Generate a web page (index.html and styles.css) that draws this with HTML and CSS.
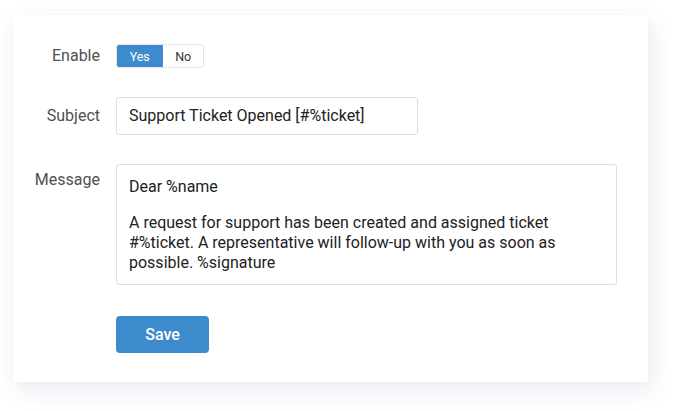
FILE: index.html
```html
<!DOCTYPE html>
<html lang="en">
<head>
    <meta charset="UTF-8">
    <meta name="viewport" content="width=device-width, initial-scale=1.0">
    <title>Ticket Notification</title>
    <link rel="stylesheet" href="styles.css">
</head>
<body>

    <div class="card">
        <form class="settings-form">
            <label class="field-label label-middle">Enable</label>
            <div class="toggle">
                <span class="toggle-option active">Yes</span>
                <span class="toggle-option">No</span>
            </div>

            <label class="field-label label-middle">Subject</label>
            <div class="text-input">Support Ticket Opened [#%ticket]</div>

            <label class="field-label label-top">Message</label>
            <div class="text-area">
                <p>Dear %name</p>
                <p>A request for support has been created and assigned ticket #%ticket. A representative will follow-up with you as soon as possible. %signature</p>
            </div>

            <span></span>
            <div class="actions">
                <button type="button" class="save-button">Save</button>
            </div>
        </form>
    </div>

</body>
</html>
```

FILE: styles.css
```css
body {
    margin: 0;
    padding: 15px 31px 29px 13px;
    background-color: #ffffff;
    font-family: Roboto, 'Liberation Sans', sans-serif;
    color: #222;
}

.card {
    height: 367px;
    box-sizing: border-box;
    background-color: #fff;
    box-shadow: 4px 8px 22px rgba(60, 60, 130, 0.1), 0 0 4px rgba(60, 60, 130, 0.03);
    padding: 29px 30px 0 0;
}

.settings-form {
    display: grid;
    grid-template-columns: 87px 1fr;
    column-gap: 16px;
    row-gap: 29px;
}

.field-label {
    font-size: 16px;
    color: #505050;
    text-align: right;
    line-height: 20px;
}

.label-middle {
    align-self: center;
}

.label-top {
    padding-top: 6px;
}

.toggle {
    display: flex;
    width: 88px;
    height: 24px;
    box-sizing: border-box;
    border: 1px solid #e6e6e6;
    border-radius: 3px;
    overflow: hidden;
    font-size: 12.5px;
}

.toggle-option {
    display: flex;
    align-items: center;
    justify-content: center;
    width: 40px;
    color: #333;
}

.toggle-option.active {
    width: 48px;
    margin: -1px 0 -1px -1px;
    background-color: #3d8bcd;
    color: #fff;
}

.text-input {
    width: 302px;
    height: 38px;
    box-sizing: border-box;
    border: 1px solid #dedede;
    border-radius: 3px;
    padding: 0 12px;
    font-size: 16px;
    line-height: 36px;
}

.text-area {
    width: 501px;
    height: 121px;
    box-sizing: border-box;
    border: 1px solid #dedede;
    border-radius: 3px;
    padding: 12px 12px;
    font-size: 16px;
    line-height: 20px;
}

.text-area p {
    margin: 0 0 16px;
}

.actions {
    padding-top: 2px;
}

.save-button {
    width: 93px;
    height: 37px;
    border: none;
    border-radius: 4px;
    background-color: #3d8bcd;
    color: #fff;
    font-family: Roboto, 'Liberation Sans', sans-serif;
    font-size: 16px;
    font-weight: 500;
    cursor: pointer;
}
```
